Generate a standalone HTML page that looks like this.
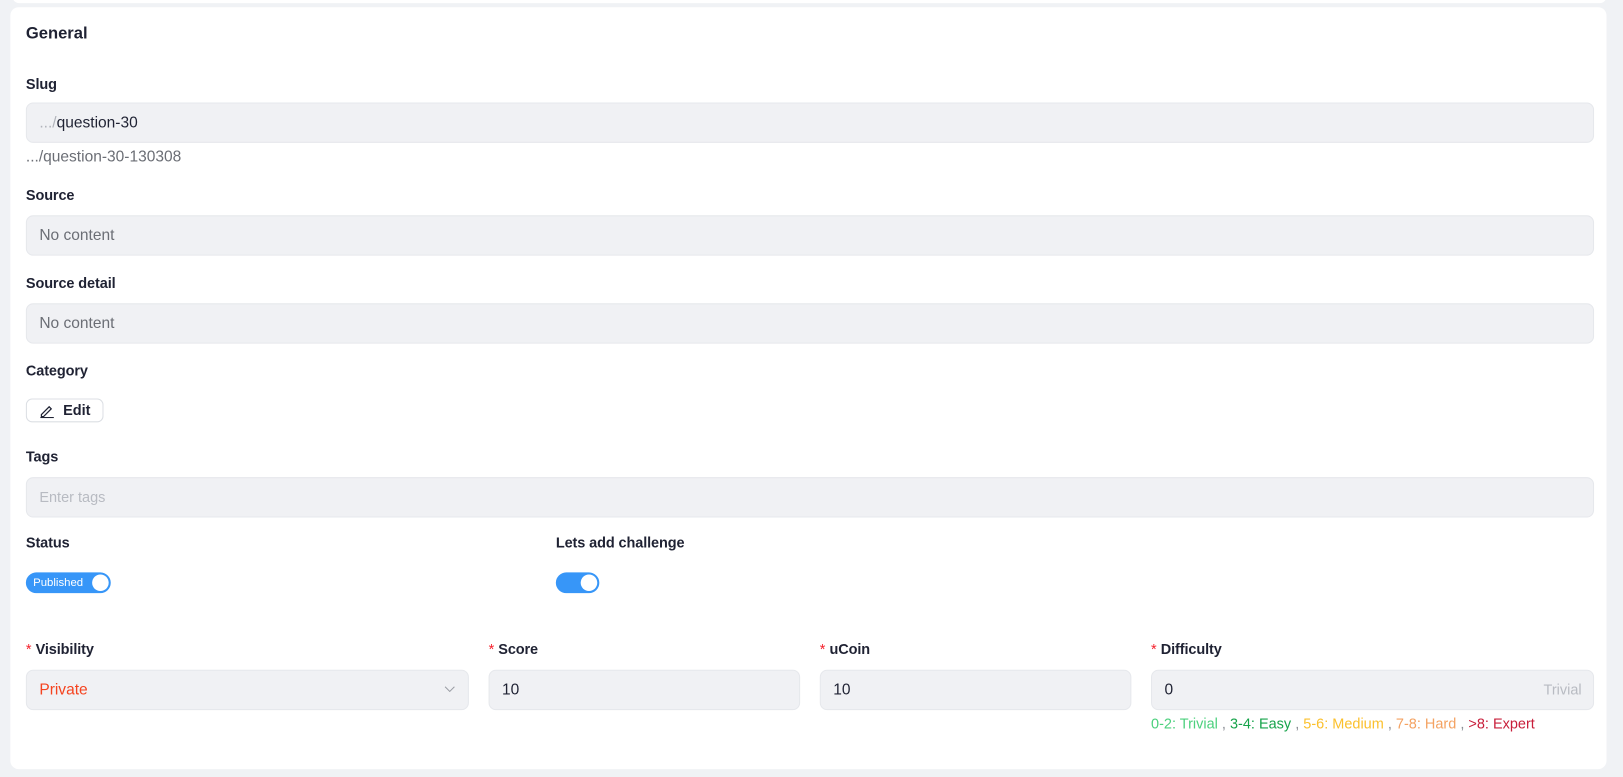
<!DOCTYPE html>
<html><head><style>
*{box-sizing:border-box;margin:0;padding:0}
body{width:1623px;height:777px;background:#f0f2f5;font-family:"Liberation Sans",Arial,sans-serif;position:relative;overflow:hidden;color:#1f2233}
#w{position:absolute;left:0;top:0;width:1568px;height:751px;transform:scale(1.0351);transform-origin:0 0}
.topcard{position:absolute;left:12px;top:-10px;width:1540px;height:13px;background:#fff;border-radius:8px}
.card{position:absolute;left:10px;top:7px;width:1542px;height:736px;background:#fff;border-radius:8px}
.a{position:absolute}
.lbl{font-size:14px;font-weight:bold;color:#1f2233;letter-spacing:-0.1px}
.inp{position:absolute;background:#f0f1f4;border:1px solid #e6e8ec;border-radius:7px;height:39px;font-size:15px;padding-left:12px;line-height:37px;color:#1f2233}
.req{color:#f5222d;font-weight:normal;margin-right:4px}
.tog{position:absolute;height:20px;background:#3796f8;border-radius:10px}
.knob{position:absolute;top:2px;width:16px;height:16px;border-radius:50%;background:#fff}
</style></head><body><div id="w">
<div class="topcard"></div>
<div class="card"></div>
<div class="a" style="left:25px;top:24px;font-size:16px;font-weight:bold">General</div>

<div class="a lbl" style="left:25px;top:73px">Slug</div>
<div class="inp" style="left:25px;top:99px;width:1515px"><span style="color:#b0b3ba">.../</span>question-30</div>
<div class="a" style="left:25px;top:143px;font-size:15px;color:#6b6e75">.../question-30-130308</div>

<div class="a lbl" style="left:25px;top:180px">Source</div>
<div class="inp" style="left:25px;top:208px;width:1515px;color:#6b6e75">No content</div>

<div class="a lbl" style="left:25px;top:265px">Source detail</div>
<div class="inp" style="left:25px;top:293px;width:1515px;color:#6b6e75">No content</div>

<div class="a lbl" style="left:25px;top:350px">Category</div>
<div class="a" style="left:25px;top:385px;width:75px;height:23px;border:1px solid #dcdfe4;border-radius:6px;font-size:14px;font-weight:bold;line-height:21px;padding-left:35px">Edit
<svg style="position:absolute;left:12px;top:4px" width="15" height="14" viewBox="0 0 15 14"><path d="M2 10.5 L9.5 3 L11.5 5 L4 12.5 L2 12.5 Z" fill="none" stroke="#1f2233" stroke-width="1.2"/><path d="M1 13.5 H14" stroke="#1f2233" stroke-width="1.2"/></svg></div>

<div class="a lbl" style="left:25px;top:433px">Tags</div>
<div class="inp" style="left:25px;top:461px;width:1515px;color:#b8bbc2;font-size:14px">Enter tags</div>

<div class="a lbl" style="left:25px;top:516px">Status</div>
<div class="tog" style="left:25px;top:553px;width:82px"><span style="position:absolute;left:7px;top:0;line-height:20px;font-size:11px;color:#fff">Published</span><div class="knob" style="left:64px"></div></div>
<div class="a lbl" style="left:537px;top:516px">Lets add challenge</div>
<div class="tog" style="left:537px;top:553px;width:42px"><div class="knob" style="left:24px"></div></div>

<div class="a lbl" style="left:25px;top:619px"><span class="req">*</span>Visibility</div>
<div class="inp" style="left:25px;top:647px;width:428px;color:#f5431f">Private
<svg style="position:absolute;right:12px;top:14px" width="11" height="8" viewBox="0 0 11 8"><path d="M1 1.5 L5.5 6 L10 1.5" fill="none" stroke="#9a9da4" stroke-width="1"/></svg></div>
<div class="a lbl" style="left:472px;top:619px"><span class="req">*</span>Score</div>
<div class="inp" style="left:472px;top:647px;width:301px">10</div>
<div class="a lbl" style="left:792px;top:619px"><span class="req">*</span>uCoin</div>
<div class="inp" style="left:792px;top:647px;width:301px">10</div>
<div class="a lbl" style="left:1112px;top:619px"><span class="req">*</span>Difficulty</div>
<div class="inp" style="left:1112px;top:647px;width:428px">0<span style="position:absolute;right:11px;color:#b8bbc2;font-size:14px">Trivial</span></div>
<div class="a" style="left:1112px;top:691px;font-size:14px;color:#8a8d94"><span style="color:#4cd07d">0-2: Trivial</span> , <span style="color:#16a34a">3-4: Easy</span> , <span style="color:#fbc02d">5-6: Medium</span> , <span style="color:#f4a261">7-8: Hard</span> , <span style="color:#c81e3a">&gt;8: Expert</span></div>
</div></body></html>
